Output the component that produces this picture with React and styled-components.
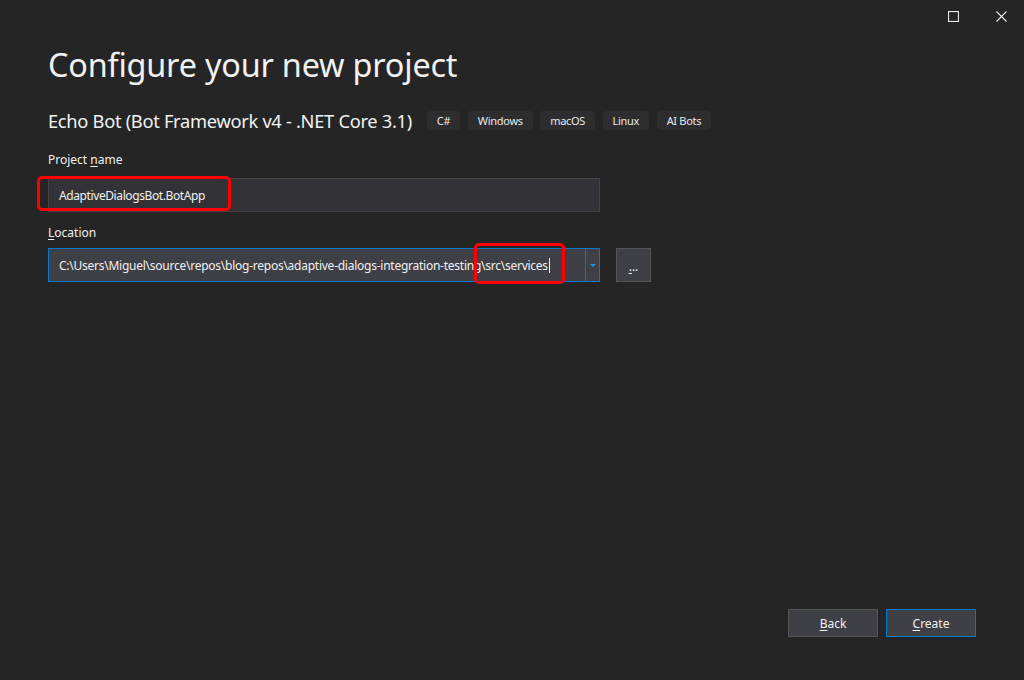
import styled, { createGlobalStyle } from 'styled-components'

const Global = createGlobalStyle`
  html, body {
    margin: 0;
    padding: 0;
    background: #252526;
  }
  body {
    font-family: "Noto Sans", "Open Sans", sans-serif;
    color: #f1f1f1;
  }
`

const Window = styled.div`
  width: 1024px;
  height: 680px;
  background: #252526;
  display: flex;
  flex-direction: column;
  box-sizing: border-box;
  position: relative;
`

const TitleBar = styled.div`
  height: 32px;
  display: flex;
  justify-content: flex-end;
  align-items: center;
  padding-right: 0;
`

const WinButton = styled.div`
  width: ${p => p.$w || 46}px;
  height: 32px;
  display: flex;
  align-items: center;
  justify-content: center;
  color: #e0e0e0;
`

const Content = styled.div`
  flex: 1;
  padding: 10px 0 0 48px;
  display: flex;
  flex-direction: column;
`

const Heading = styled.h1`
  margin: 0;
  font-family: "Noto Sans", sans-serif;
  font-weight: 400;
  font-size: 32.4px;
  line-height: 44px;
  color: #f1f1f1;
  letter-spacing: -0.2px;
`

const SubRow = styled.div`
  display: flex;
  align-items: center;
  margin-top: 21px;
  height: 26px;
`

const SubTitle = styled.div`
  font-size: 18.3px;
  color: #f1f1f1;
  margin-right: 15px;
  letter-spacing: -0.3px;
`

const Tag = styled.span`
  background: #2d2d30;
  border-radius: 3px;
  font-size: 11px;
  height: 19px;
  line-height: 19px;
  padding: 0 10px;
  margin-right: 7.5px;
  color: #e8e8e8;
  letter-spacing: -0.3px;
`

const Label = styled.div`
  font-size: 12px;
  margin-top: ${p => p.$top}px;
  height: 16px;
  line-height: 16px;
  color: #f1f1f1;
`

const Key = styled.span`
  text-decoration: underline;
  text-underline-offset: 2px;
`

const FieldRow = styled.div`
  display: flex;
  align-items: center;
  margin-top: ${p => p.$top}px;
  position: relative;
`

const Input = styled.div`
  width: 552px;
  height: 34px;
  box-sizing: border-box;
  background: ${p => (p.$focus ? '#3f3f46' : '#333337')};
  border: 1px solid ${p => (p.$focus ? '#007acc' : '#434346')};
  display: flex;
  align-items: center;
  font-size: 12px;
  color: #f1f1f1;
  position: relative;
`

const InputText = styled.div`
  flex: 1;
  padding-left: 10px;
  white-space: nowrap;
  overflow: hidden;
  display: flex;
  align-items: center;
  letter-spacing: ${p => p.$ls || -0.25}px;
`

const Caret = styled.span`
  display: inline-block;
  width: 1px;
  height: 15px;
  background: #f1f1f1;
  margin-left: 1px;
`

const DropPart = styled.div`
  width: 13px;
  height: 100%;
  border-left: 1px solid #007acc;
  display: flex;
  align-items: center;
  justify-content: center;
`

const Arrow = styled.div`
  width: 0;
  height: 0;
  border-left: 3px solid transparent;
  border-right: 3px solid transparent;
  border-top: 3px solid #1c97ea;
`

const Browse = styled.div`
  width: 35px;
  height: 34px;
  box-sizing: border-box;
  margin-left: 16px;
  background: #3f3f46;
  border: 1px solid #555555;
  display: flex;
  align-items: center;
  justify-content: center;
  font-size: 12px;
  padding-top: 2px;
`

const Highlight = styled.div`
  position: absolute;
  left: ${p => p.$x}px;
  top: ${p => p.$y}px;
  width: ${p => p.$w}px;
  height: ${p => p.$h}px;
  border: 3px solid #ff0000;
  border-radius: 5px;
  box-sizing: border-box;
  pointer-events: none;
`

const Footer = styled.div`
  display: flex;
  justify-content: flex-end;
  gap: 8px;
  padding: 0 48px 43px 0;
`

const Button = styled.div`
  width: 90px;
  height: 28px;
  box-sizing: border-box;
  background: #3f3f46;
  border: 1px solid ${p => (p.$primary ? '#007acc' : '#555555')};
  display: flex;
  align-items: center;
  justify-content: center;
  font-size: 12px;
  color: #f1f1f1;
`

export default function App() {
  return (
    <Window>
      <Global />
      <TitleBar>
        <WinButton $w={50}>
          <svg width="11" height="11" viewBox="0 0 11 11">
            <rect x="0.5" y="0.5" width="10" height="10" fill="none" stroke="#e8e8e8" strokeWidth="1.2" />
          </svg>
        </WinButton>
        <WinButton>
          <svg width="11" height="11" viewBox="0 0 11 11">
            <path d="M0.5 0.5L10.5 10.5M10.5 0.5L0.5 10.5" stroke="#e8e8e8" strokeWidth="1.1" />
          </svg>
        </WinButton>
      </TitleBar>
      <Content>
        <Heading>Configure your new project</Heading>
        <SubRow>
          <SubTitle>Echo Bot (Bot Framework v4 - .NET Core 3.1)</SubTitle>
          <Tag>C#</Tag>
          <Tag>Windows</Tag>
          <Tag>macOS</Tag>
          <Tag>Linux</Tag>
          <Tag>AI Bots</Tag>
        </SubRow>
        <Label $top={19}>
          Project <Key>n</Key>ame
        </Label>
        <FieldRow $top={10}>
          <Input>
            <InputText $ls={-0.4}>AdaptiveDialogsBot.BotApp</InputText>
          </Input>
          <Highlight $x={-11} $y={-2} $w={194} $h={35} />
        </FieldRow>
        <Label $top={13}>
          <Key>L</Key>ocation
        </Label>
        <FieldRow $top={7}>
          <Input $focus>
            <InputText>
              C:\Users\Miguel\source\repos\blog-repos\adaptive-dialogs-integration-testing\src\services
              <Caret />
            </InputText>
            <DropPart>
              <Arrow />
            </DropPart>
          </Input>
          <Browse>
            <Key>.</Key>..
          </Browse>
          <Highlight $x={426} $y={-5} $w={91} $h={41} />
        </FieldRow>
      </Content>
      <Footer>
        <Button>
          <Key>B</Key>ack
        </Button>
        <Button $primary>
          <Key>C</Key>reate
        </Button>
      </Footer>
    </Window>
  )
}
